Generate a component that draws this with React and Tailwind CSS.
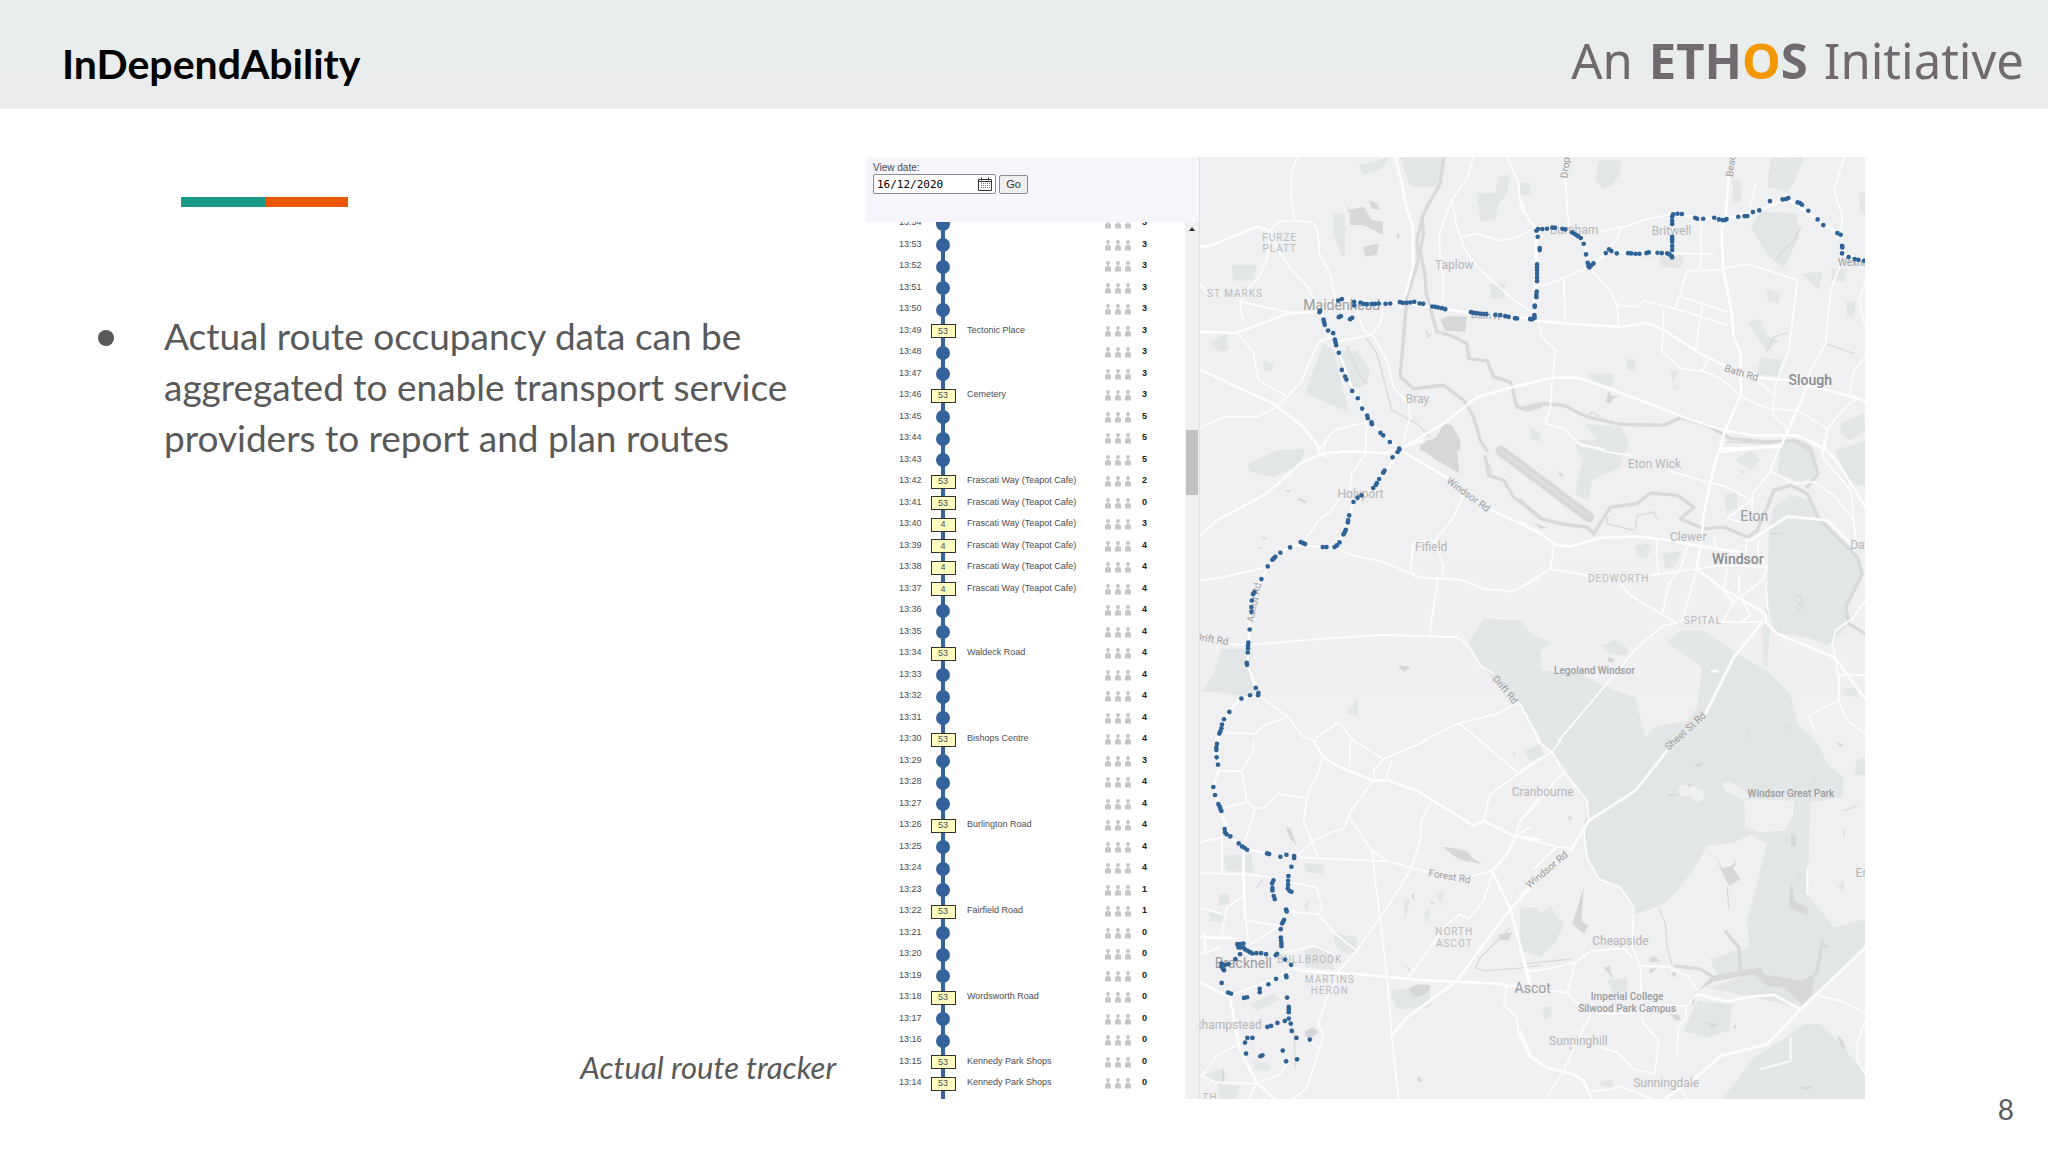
import React from "react";

const START_MINUTE = 54;

// [occupancy, route, stop] per minute, newest first
const LOG = [
  [3], [3], [3], [3], [3],
  [3, "53", "Tectonic Place"],
  [3], [3],
  [3, "53", "Cemetery"],
  [5], [5], [5],
  [2, "53", "Frascati Way (Teapot Cafe)"],
  [0, "53", "Frascati Way (Teapot Cafe)"],
  [3, "4", "Frascati Way (Teapot Cafe)"],
  [4, "4", "Frascati Way (Teapot Cafe)"],
  [4, "4", "Frascati Way (Teapot Cafe)"],
  [4, "4", "Frascati Way (Teapot Cafe)"],
  [4], [4],
  [4, "53", "Waldeck Road"],
  [4], [4], [4],
  [4, "53", "Bishops Centre"],
  [3], [4], [4],
  [4, "53", "Burlington Road"],
  [4], [4], [1],
  [1, "53", "Fairfield Road"],
  [0], [0], [0],
  [0, "53", "Wordsworth Road"],
  [0], [0],
  [0, "53", "Kennedy Park Shops"],
  [0, "53", "Kennedy Park Shops"],
];

// The map is cut in six tiles; every tile has its own origin.
const TILES = [
  {
    id: "maidenhead",
    x: -27,
    y: -21,
    parks: "M400,580L345,730 440,770 475,785 430,600ZM440,600L500,600 540,660 530,700 480,725 450,650ZM505,45L600,22 570,60 520,75ZM630,22L765,22 740,110 660,110ZM860,130L915,130 925,80 960,75 950,130 925,160 915,210 870,215ZM125,345L200,345 190,390 130,390ZM60,580L110,545 115,600 90,605ZM900,400L945,400 940,445 900,445ZM430,190L465,190 465,320 455,320 430,250ZM990,100L1020,100 1018,135 990,132ZM220,630L250,640 245,665 220,660Z",
    lakes: "M478,180L520,170 545,210 578,215 578,255 520,225 480,225ZM520,290L565,280 560,315 525,320ZM750,510L770,498 830,500 825,545 765,542ZM470,165L482,185 474,185ZM535,152L560,158 570,180 545,175ZM690,885L740,860 760,820 785,825 810,870 810,900 690,900ZM620,250L628,250 628,262 620,262Z",
    rivers: "M760,22L750,100 700,190 680,270 685,330 650,440 640,560 630,680 670,715 760,705 820,750 850,800 870,870 890,900M695,200L700,250 690,300 705,380 708,430 740,545 780,555 830,580 835,625 890,632 910,680 960,695 980,770 1010,780 1050,768",
    streams: "M470,590L510,680 530,700M525,560L560,610 605,780 680,820 720,860M708,540L712,560 722,552",
    minor: "M320,22L305,70 303,150 314,212 265,214 240,240M314,212L368,218 384,250 388,310 420,370 434,440M240,250L265,300 300,355 345,400 385,470M240,260L230,330 205,385 160,430 150,470 160,510M145,452L200,465 300,488M140,548L190,605 205,690 285,735M30,833L100,800 200,800 260,770 330,700 385,575 430,555M850,22L830,85 785,150 748,250 750,350 760,380 757,460M785,150L800,230 825,300 860,350 960,440 1035,495M950,22L985,100 990,170 1035,235M810,262L860,250 930,272 980,262 1020,240M500,480L520,540 550,560 590,630 610,710 655,760 660,800 640,870M430,575L545,555 570,520 578,480M390,895L430,840 530,815 525,900M30,400L50,430",
    major: "M30,288L60,288 200,230 225,236 245,250M30,545L140,548 300,488 385,486M30,658L150,715 250,760 340,830 390,895M615,22L635,100 650,180 668,230 668,350 650,420 632,470M640,890L760,820 860,740 970,710 1050,690M385,486L440,450 640,458 840,488 1030,505 1041,240M390,484L440,590 480,700 545,820 627,895",
    dots: "390,481 388,486 400,508 402,516 404,524 414,541 429,549 434,568 436,576 438,585 446,608 455,659 465,679 469,688 486,722 503,744 516,775 531,796 533,804 544,816 545,822 571,848 579,855 599,875 627,895 444,451 455,447 492,455 492,466 511,457 520,461 530,462 545,461 555,461 566,460 586,461 600,460 629,456 638,458 649,458 660,457 672,455 688,460 699,461 726,469 735,470 744,472 755,474 765,477 842,486 850,488 858,489 868,490 878,491 888,492 915,494 930,495 945,498 955,500 974,504 980,505 1020,507 446,501 452,498 480,507 486,503",
  },
  {
    id: "slough",
    x: 963,
    y: -21,
    parks: "M235,30L300,30 300,70 275,105 250,118 225,90ZM750,25L850,22 820,100 800,125 740,110ZM720,185L830,190 835,260 790,355 745,320 690,230ZM840,370L905,365 895,420ZM680,515L720,505 740,560 775,570 740,605 710,560ZM720,620L785,630 770,680 710,670ZM415,320L490,315 480,355 420,350ZM190,820L300,830 325,870 320,900 250,895ZM200,670L280,670 275,710 220,695ZM0,98L30,98 30,135 0,132ZM740,415L778,430 775,460 740,450ZM635,90L660,90 665,150 640,160ZM930,355L980,355 970,395 935,390ZM30,830L60,850 60,875 30,865ZM1015,125L1034,125 1034,200 1018,185ZM975,455L1005,455 1000,500 980,500ZM960,820L1030,790 1034,840 990,870 960,850ZM315,630L345,625 345,660 320,660ZM450,660L475,665 455,700 480,715 460,715Z",
    lakes: "M255,755L265,722 275,738 298,735 275,748 270,760Z",
    rivers: "M0,775L60,760 130,765 200,800 300,822 430,825 480,802 560,825 630,865 740,875 820,870 870,895",
    streams: "M840,230L820,275 790,300 765,330M740,600L760,560 800,548M915,580L1000,610M200,800L215,785 240,800",
    minor: "M135,85L140,170 146,235M0,145L20,200 48,235M970,22L940,120 965,200 962,240M45,405L80,403 150,375 205,352M205,352L270,420 290,465 350,470 370,452 480,480 620,525M290,465L295,530M130,390L135,520M55,525L65,560 105,600 95,700 90,770 75,820 130,835 180,885 250,895M605,355L680,342 740,360 830,390 805,600 765,700 755,790 800,835M605,360L500,362 465,475M480,440L620,485M545,470L525,600M430,475L425,605 485,655 545,662 600,685 665,740 740,775 830,780 920,835 985,760 1015,745M565,625L545,662M960,340L930,420 915,580 870,660 855,720M1034,395L1015,450 1030,520M1034,620L1000,660 985,740M240,245L330,225 370,210 460,190M300,235L290,270 230,330M460,310L580,312M543,210L540,355M920,835L912,900M700,680L755,730M705,100L690,170",
    major: "M625,75L615,200 603,240 608,355 632,480 640,560 660,610 662,730 610,850 600,895M45,512L135,520 300,530 380,518 430,540 540,610 620,650M715,683L800,690 900,715 1015,745 1034,755M0,706L95,682 170,682 240,705 400,765 500,805 610,840 700,855 830,855 905,890M855,720L780,890 600,895M48,240L130,235 190,275 207,350 266,305 455,310 455,195 610,207 716,181 800,145 965,260 964,310 1034,332M48,240L43,505",
    dots: "48,242 53,237 66,237 80,236 96,233 104,233 126,236 135,238 155,247 162,251 168,255 174,259 181,264 190,281 197,313 202,338 204,348 207,352 212,346 219,340 256,309 266,298 273,303 289,310 323,309 332,310 345,311 357,311 378,309 385,307 411,308 424,309 440,310 447,313 453,318 455,322 455,300 455,288 455,275 455,268 455,260 455,222 455,212 455,200 458,193 471,191 484,192 524,203 530,206 548,206 581,203 595,208 606,210 613,210 618,207 653,200 672,198 680,198 697,186 716,181 748,153 786,148 796,147 803,144 831,157 838,159 844,164 863,182 891,208 908,225 950,249 960,254 964,287 965,292 964,310 984,321 1002,327 1013,329 1030,332 52,260 58,294 58,300 50,343 50,352 50,360 50,371 50,382 50,393 49,424 48,433 48,441 43,466 43,470 42,495 43,503 36,507 30,506",
  },
  {
    id: "holyport",
    x: -27,
    y: 849,
    parks: "M175,70L260,30 345,25 330,75 250,110 180,95ZM95,625L190,625 175,690 200,770 80,755 35,755 70,700ZM470,815L502,770 505,830Z",
    lakes: "M710,0L810,0 800,30 808,100 740,60 690,25ZM285,150L303,150 295,157ZM325,172L350,182 345,189 322,179ZM627,674L660,678 645,695 628,684ZM213,290L230,292 222,298ZM202,321L217,322 210,328Z",
    rivers: "M885,50L895,105 940,120 970,170 1050,230",
    streams: "M885,50L905,95 895,110",
    basin: "M932,32L1195,230",
    minor: "M375,0L390,40 410,50 400,35M410,0L395,40M530,0L525,40 485,100 480,150M450,170L420,215 385,240 345,300M820,160L790,230 735,300 750,350 760,380 755,412 743,418 717,585M735,300L670,305 660,390 680,410 810,418 880,445 965,453 1050,412M345,315L445,325 490,345 580,365 680,408M30,420L100,410 230,380M120,612L185,612 400,595 570,583 800,590 830,610 870,675 910,700M985,785L1050,900M205,765L290,825 340,890 380,900M290,830L220,855 195,880 90,875M380,890L445,845 490,900M700,900L805,848 920,820 980,785M805,848L870,900",
    major: "M30,288L80,240 230,160 330,70 400,38 480,33 590,38 650,15 700,0M640,35L775,115M905,210L1050,278M630,28L550,145 490,185 475,240 460,285 435,320M345,312L300,320 250,355 215,415 190,460 180,550 175,620 172,670 205,765 150,775 115,815 85,890",
    dots: "627,28 622,35 607,51 583,91 579,97 567,116 560,128 557,134 549,143 514,165 502,172 490,185 477,225 474,240 473,246 467,268 464,275 460,282 448,306 440,315 433,320 409,320 398,320 345,311 339,308 332,305 300,321 271,337 256,349 251,354 247,358 233,378 214,416 193,455 189,461 185,480 184,500 184,514 179,567 175,606 174,615 174,624 173,636 170,667 171,673 197,742 205,757 204,764 180,764 154,774 118,814 102,836 96,852 94,863 91,872 88,879",
  },
  {
    id: "windsor",
    x: 963,
    y: 849,
    parks: "M745,270L760,200 810,165 870,180 900,240 1010,350 1020,400 975,490 980,560 920,615 860,590 760,575 740,480ZM-155,605L-110,535 0,540 40,585 95,605 60,630 65,690 180,700 270,745 345,770 375,895 400,860 500,840 530,800 545,680 440,605 480,570 550,570 650,640 740,690 810,760 830,850 890,905 920,970 970,1010 965,1070 870,1085 860,1360 940,1460 1034,1435 1034,1520 880,1670 840,1700 560,1640 690,1600 680,1440 740,1210 690,1180 640,1205 560,1215 540,1250 480,1340 430,1390 345,1420 320,1360 300,1340 235,1310 200,1250 190,1150 205,1095 200,1080 100,935 50,895 -5,790 -80,720 -120,670ZM725,560L748,560 740,680 728,675ZM160,0L325,0 300,80 215,120 205,180 165,160 185,60ZM945,30L1034,0 1034,135 980,130ZM345,315L390,310 380,355 350,345ZM425,340L485,330 460,380 435,385ZM240,615L285,598 325,625 320,645 270,640ZM780,0L860,0 890,50 880,110 840,125 770,100ZM965,745L1010,740 1010,770 975,765ZM610,165L650,155 650,200 620,220ZM645,60L690,30 720,60 690,90Z",
    cutouts: "M670,1080L690,1075 820,1080 818,1125 790,1170 720,1175 675,1160ZM470,1040L500,1030 550,1050 550,1075 530,1085 510,1065 480,1065ZM605,1025L630,1025 690,1065 670,1080 610,1045Z",
    lakes: "M262,650L280,655 280,666 264,664ZM45,250L80,262 60,265ZM110,88L130,105 120,108ZM660,88L678,98 665,98Z",
    rivers: "M0,180L60,235 120,250 200,260 220,280 270,200 350,190 390,158 470,165 520,200 480,235 550,265 610,260 680,290 710,270 740,200 760,150 810,135 860,160 895,235 950,290 1010,350 1025,400 975,500 985,550 1034,580M820,0L870,30 892,100 860,140",
    streams: "M345,265L350,225 400,215 410,235M260,230L260,250 340,270M735,560L740,500M825,470L840,465 845,490 835,515M825,480L850,505M620,5L760,10M780,280L750,280M790,865L805,858M683,878L684,888",
    minor: "M165,5L260,35 330,45M440,90L560,125 620,140 690,180 620,235 660,245M780,10L745,100 695,160 695,210M910,0L905,50 990,150 1005,300M755,95L820,130 880,125 940,165 1000,240M100,315L90,385 0,440M90,385L200,405M390,405L530,385 600,375 735,380M410,300L408,350 415,400M500,320L480,385 445,430 425,520M528,390L485,540M300,430L330,465 470,548M600,545L725,545M470,548L430,555 350,620 250,740 115,900M680,295L675,335M715,300L710,330 740,380 725,420 640,485 605,545M735,430L742,510M1034,480L1000,530 945,570 935,610 945,650 950,705 1034,703M955,700L955,780 865,825 885,875M955,785L980,840 1034,880M620,390L610,440M655,400L655,455M665,480L690,525 665,540M0,790L55,900M580,290L585,320",
    major: "M605,0L580,80 550,220 540,320 528,385 600,440 640,485M600,440L735,520 735,545 770,580 940,650 1034,775M0,245L60,280 110,315 150,318 240,292 350,288 450,300 540,318 660,335M600,35L780,15M860,0L920,30 960,80 1034,200M725,545L640,650 600,730 555,820M690,300L800,228 920,240 1000,320M575,692L591,692",
    dots: "",
  },
  {
    id: "bracknell",
    x: -27,
    y: 1749,
    parks: "M100,345L185,340 190,395 110,390ZM340,365L400,375 400,400 350,395ZM430,575L500,590 500,630 470,640 435,615ZM55,510L100,520 90,545 60,540ZM85,460L115,460 120,490 85,495ZM180,790L250,760 270,775 200,810ZM40,1000L100,985 110,1020 60,1020ZM85,1030L150,1035 140,1075 90,1075ZM600,750L720,730 720,800 620,805ZM345,630L380,615 430,640 430,685 345,680ZM1000,30L1050,10 1050,50 1020,60ZM190,960L240,970 235,990 195,985ZM340,490L360,480 350,510ZM640,480L660,475 645,540ZM740,460L760,450 755,500ZM700,520L720,500 715,545Z",
    lakes: "M287,260L300,262 318,312 300,295ZM755,318L790,322 830,332 850,355 878,370 820,360 790,345ZM655,748Q670,722 718,735Q720,765 670,768ZM680,1012L690,1006 695,1022 684,1024ZM925,580L965,575 955,598 932,598ZM662,465L672,458 674,480ZM720,480L735,490 722,490ZM966,34L976,36 974,43ZM345,870L370,860 385,875 365,890 345,890ZM648,672L662,690 655,690Z",
    rivers: "",
    streams: "M300,270L318,312M312,870L316,980M870,650L856,680 880,690 990,682 1050,672M870,650L960,560M100,985L100,1020 90,1030M220,415L200,440",
    minor: "M480,0L478,75M490,0L580,55 710,0M580,55L550,90 555,120M605,60L590,110M870,0L985,100 1050,55M985,100L900,160 880,240M395,55L380,110 355,150 340,240 385,350M545,125L480,215 460,265 420,275 370,300 325,340M475,225L545,330 570,540 590,700 605,885 625,1075M545,330L590,360M325,350L590,362 710,392M830,410L905,390M720,190L693,240 690,300 660,390 590,500 500,630 445,690M905,400L880,480 835,535 810,520 760,560 720,620 650,715M950,735L940,790 980,830 985,880 1020,950 1050,970M85,90L155,92 170,180 195,205 225,198 265,160 345,172M155,92L190,30 190,0M195,205L165,300 160,400 165,520 175,600M105,200L165,185M30,305L95,290 97,395M30,397L160,400 240,410M300,425L380,440 395,500 385,520 295,512M385,520L430,575 500,630M160,465L110,500 95,580M30,500L95,520M175,540L270,555 180,610M30,640L90,620M130,760L170,745 250,715 310,680M275,635L310,630 370,615 430,640M445,690L440,720 410,770 385,850 400,880 380,950 350,1040 310,1075M150,905L80,945 35,1005 80,1025 200,1028 270,1000 290,965M175,1075L200,1028M345,890L390,925M1020,260L975,285M1050,180L990,240 975,285M1010,690L1050,690",
    major: "M370,0L400,50 440,75 550,120 590,118 680,150 850,255 880,240 970,285 1050,298M975,285L950,340 905,390 960,505 1010,690 1020,730M1050,410L960,505 880,610 800,720 650,830 605,885M300,680L340,690 500,700 700,718 930,728 950,735 985,735M30,590L140,592M30,725L120,770 140,880 150,930 200,1025 255,1075M45,580L45,630M85,0L85,90 70,140 105,250 120,290 170,325 240,340M160,330L160,400 165,520",
    dots: "81,10 79,21 79,28 80,50 84,72 70,139 75,163 85,190 89,198 91,204 94,211 104,265 105,275 110,281 121,287 146,308 156,317 163,321 171,327 231,338 237,340 271,348 289,342 312,346 312,352 304,378 295,406 294,420 294,432 293,443 298,450 304,453 250,419 246,428 247,442 247,449 251,466 254,475 288,506 290,512 282,537 279,543 276,548 272,565 272,590 273,600 274,608 274,616 261,639 257,643 285,656 303,672 228,640 213,637 199,637 187,638 180,634 173,630 165,626 160,620 152,620 145,620 142,610 150,610 160,608 150,640 136,655 115,670 105,672 95,668 94,676 98,683 102,688 95,726 114,755 123,758 162,771 171,769 209,744 209,754 235,730 258,714 288,704 289,709 291,770 296,798 296,806 296,814 296,833 284,840 302,848 262,846 243,855 232,858 305,870 319,891 359,896 172,891 187,891 165,905 168,938 211,946 217,943 278,929 288,961 321,955",
  },
  {
    id: "ascot",
    x: 963,
    y: 1749,
    parks: "M605,1075L700,950 780,900 850,850 900,850 960,910 1034,1000 1034,1075ZM0,500L50,500 60,520 90,495 105,520 130,550 110,600 60,650 0,630ZM490,870L530,780 635,790 625,870 560,890ZM570,655L650,630 690,620 690,700 590,710ZM240,1020L280,1015 275,1040 240,1035ZM10,30L60,10 70,45 30,60ZM70,795L95,800 90,830 70,835ZM1005,60L1034,50 1034,105 1005,100ZM260,720L320,710 320,750 280,760ZM950,440L970,415 970,450Z",
    lakes: "M585,345L605,382 635,378 660,415 625,435 605,395ZM615,380Q640,378 645,357Q650,380 625,388ZM190,437L183,540 203,555 190,578 155,550 165,520ZM660,690L720,680 730,700 840,720 880,700 875,760 845,790 790,740 740,735 700,700 580,722 535,748 575,705ZM808,440L815,430 820,480 860,500 860,525 805,500ZM810,280L825,285 828,318 812,315ZM250,680L270,675 270,690 280,718 262,695ZM388,655L400,645 418,662 388,664ZM385,685L410,680 390,700ZM455,695L467,695 465,706 458,706ZM450,820L475,820 480,838 465,838ZM512,775L525,770 518,795ZM560,845L595,850 575,862ZM635,862L645,850 648,862ZM950,885L960,888 978,928 960,915ZM840,1038L875,1036 870,1044 845,1046ZM143,225L158,230 148,240ZM145,915L160,922 148,928ZM525,70L548,65 540,80 525,76ZM440,160L475,160 445,168ZM500,130L518,130 505,142ZM948,5L968,12 960,20ZM875,108L885,122 878,122Z",
    rivers: "M465,675L540,685 580,710 660,695M660,690L655,620 615,572M860,730L890,690 905,600M905,620L920,615",
    streams: "M620,440L625,505M415,500L435,550 440,620 455,670M0,670L150,655M830,420L840,400M970,210L1010,195M968,265L970,285",
    minor: "M0,90L95,35 120,0M50,0L95,35 130,95 200,180 205,240 190,270 200,350 235,415 300,440 340,500 335,620 360,680 365,840 415,900 402,1000M0,240L40,190 130,95M0,290L110,318 145,322M110,318L40,385M20,690L80,685 165,665 210,632 310,622 335,650M85,750L140,755 175,795M165,665L140,755M360,675L440,678 500,705 530,745M365,795L498,795M530,760L495,800 498,830 472,860 470,945M895,765L960,780 1034,815M1034,840L1010,900 1010,960 1034,1000M75,1075L130,990 170,900 210,820M230,915L290,935 340,985 402,1000M215,1050L270,1045 300,1035 395,1075M230,818L340,818M860,380L860,460M485,1050L500,1075M720,985L810,960 810,890",
    major: "M205,240L345,150 440,30M205,240L150,330M25,440L0,465M0,620L25,725M530,760L620,782 680,768 760,762 840,805M1034,620L840,805 740,910 600,945 520,1015 430,1075M0,870L30,945 80,980 160,1000 190,1020 215,1075",
    dots: "",
  },
];

const LABELS = [
  { text: "Maidenhead", x: 428, y: 454, kind: "town" },
  { text: "FURZE", x: 242, y: 246, kind: "district" },
  { text: "PLATT", x: 242, y: 281, kind: "district" },
  { text: "ST MARKS", x: 108, y: 415, kind: "district" },
  { text: "Taplow", x: 765, y: 330, kind: "village" },
  { text: "Bray", x: 655, y: 732, kind: "village" },
  { text: "Drop", x: 1103, y: 32, kind: "road", angle: -84 },
  { text: "Beac", x: 1599, y: 27, kind: "road", angle: -82 },
  { text: "Burnham", x: 1124, y: 225, kind: "village" },
  { text: "Britwell", x: 1416, y: 230, kind: "village" },
  { text: "Wexha", x: 1960, y: 322, kind: "road" },
  { text: "Bath Rd", x: 1624, y: 652, kind: "road", angle: 17 },
  { text: "Bath R", x: 858, y: 480, kind: "road", angle: 4 },
  { text: "Slough", x: 1832, y: 679, kind: "city" },
  { text: "Holyport", x: 484, y: 1016, kind: "village" },
  { text: "Windsor Rd", x: 804, y: 1016, kind: "road", angle: 36 },
  { text: "Fifield", x: 696, y: 1177, kind: "village" },
  { text: "Ascot Rd", x: 170, y: 1336, kind: "road", angle: -78 },
  { text: "Drift Rd", x: 38, y: 1450, kind: "road", angle: 9 },
  { text: "Drift Rd", x: 914, y: 1600, kind: "road", angle: 50 },
  { text: "Eton Wick", x: 1365, y: 926, kind: "village" },
  { text: "Eton", x: 1664, y: 1086, kind: "town" },
  { text: "Clewer", x: 1466, y: 1146, kind: "village" },
  { text: "Windsor", x: 1615, y: 1214, kind: "city" },
  { text: "Dat", x: 1979, y: 1170, kind: "village" },
  { text: "DEDWORTH", x: 1258, y: 1270, kind: "district" },
  { text: "SPITAL", x: 1510, y: 1396, kind: "district" },
  { text: "Legoland Windsor", x: 1185, y: 1543, kind: "place" },
  { text: "Sheet St Rd", x: 1461, y: 1724, kind: "road", angle: -42 },
  { text: "Cranbourne", x: 1030, y: 1910, kind: "village" },
  { text: "Windsor Great Park", x: 1774, y: 1914, kind: "place" },
  { text: "Windsor Rd", x: 1046, y: 2140, kind: "road", angle: -40 },
  { text: "Forest Rd", x: 750, y: 2161, kind: "road", angle: 10 },
  { text: "NORTH", x: 765, y: 2328, kind: "district" },
  { text: "ASCOT", x: 765, y: 2362, kind: "district" },
  { text: "Bracknell", x: 133, y: 2426, kind: "town" },
  { text: "BULLBROOK", x: 332, y: 2411, kind: "district" },
  { text: "MARTINS", x: 392, y: 2470, kind: "district" },
  { text: "HERON", x: 392, y: 2503, kind: "district" },
  { text: "thampstead", x: 92, y: 2607, kind: "village" },
  { text: "TH", x: 33, y: 2824, kind: "district" },
  { text: "Ascot", x: 1000, y: 2501, kind: "town" },
  { text: "Cheapside", x: 1263, y: 2357, kind: "village" },
  { text: "Er", x: 1984, y: 2153, kind: "village" },
  { text: "Imperial College", x: 1283, y: 2521, kind: "place" },
  { text: "Silwood Park Campus", x: 1283, y: 2558, kind: "place" },
  { text: "Sunninghill", x: 1137, y: 2655, kind: "village" },
  { text: "Sunningdale", x: 1400, y: 2782, kind: "village" },
];

const LABEL_STYLES = {
  city: "fill-[#8b8c8f] text-[42px] font-medium",
  town: "fill-[#9b9c9f] text-[42px]",
  village: "fill-[#b4b5b8] text-[36px]",
  district: "fill-[#b9babc] text-[30px] tracking-widest",
  place: "fill-[#9a9b9e] text-[30px] font-medium",
  road: "fill-[#9c9da0] text-[30px]",
};

function RouteMap() {
  return (
    <svg
      viewBox="0 0 1998 2823"
      preserveAspectRatio="xMinYMin slice"
      className="block h-full w-full bg-[#f0f0f2]"
      role="img"
      aria-label="Route map"
      fill="none"
      strokeLinecap="round"
      strokeLinejoin="round"
    >
      <defs>
        <linearGradient id="land" x1="0" y1="0" x2="0" y2="1">
          <stop offset="0" stopColor="#eff0f1" />
          <stop offset="1" stopColor="#f0eff1" />
        </linearGradient>
      </defs>
      <rect width="1998" height="2830" fill="url(#land)" />
      <path d="M1190,330L1430,300 1420,430 1250,450Z" fill="#f1f1ef" />
      <path d="M1300,2290L1480,2130 1530,2060 1700,2060 1680,2330 1500,2500 1998,2540 1998,2700 1480,2700 1320,2500Z" fill="#eef0f1" />
      <path d="M1823,1920L1998,1920 1998,2280 1900,2310 1823,2200Z" fill="#eef0f1" />

      {TILES.map((t) => (
        <g key={t.id} transform={`translate(${t.x} ${t.y})`}>
          <path d={t.parks} fill="#e3e6e7" />
          {t.cutouts && <path d={t.cutouts} fill="#eef0f1" />}
        </g>
      ))}
      {TILES.map((t) => (
        <g key={t.id} transform={`translate(${t.x} ${t.y})`} stroke="#d8d9db">
          <path d={t.lakes} fill="#d5d7d8" stroke="none" />
          <path d={t.rivers} strokeWidth="10" />
          <path d={t.streams} strokeWidth="4" />
          {t.basin && <path d={t.basin} strokeWidth="32" />}
          {t.basin && <path d={t.basin} stroke="#f0f0f2" strokeWidth="2" />}
        </g>
      ))}
      {TILES.map((t) => (
        <g key={t.id} transform={`translate(${t.x} ${t.y})`} stroke="#fdfdfe">
          <path d={t.minor} strokeWidth="5" />
          <path d={t.major} strokeWidth="8" />
        </g>
      ))}

      {LABELS.map((l) => (
        <text
          key={`${l.text}-${l.x}`}
          x={l.x}
          y={l.y}
          textAnchor="middle"
          transform={l.angle ? `rotate(${l.angle} ${l.x} ${l.y})` : undefined}
          dy="5"
          className={`font-['Roboto',sans-serif] ${LABEL_STYLES[l.kind]}`}
        >
          {l.text}
        </text>
      ))}

      {TILES.filter((t) => t.dots).map((t) => (
        <g key={t.id} transform={`translate(${t.x} ${t.y})`} fill="#2f6296">
          {t.dots.split(" ").map((p) => {
            const [cx, cy] = p.split(",");
            return <circle key={p} cx={cx} cy={cy} r="7" />;
          })}
        </g>
      ))}
      <path d="M1,0V2830" stroke="#dcdcde" strokeWidth="3" />
    </svg>
  );
}

function Person() {
  return (
    <svg viewBox="0 0 6 11" className="h-[11px] w-[6px]" fill="#c6c5c9" aria-hidden="true">
      <circle cx="3" cy="2" r="2" />
      <path d="M2.4 3.5h1.2v1.8h-1.2z" />
      <path d="M0 10.5V7.2Q0 5 3 5T6 7.2v3.3z" />
    </svg>
  );
}

function LogRow({ minute, count, route, stop }) {
  return (
    <tr className="odd:h-[21px] even:h-[22px]">
      <td className="p-0 pb-[2px] pl-[33px]">13:{minute}</td>
      <td className="p-0">
        {route ? (
          <span className="mx-auto flex h-[14px] w-[25px] items-center justify-center border border-[#333] bg-[#feffc0] leading-none">
            {route}
          </span>
        ) : (
          <span className="mx-auto block size-[14px] rounded-full bg-[#33639a]" />
        )}
      </td>
      <td className="p-0 pb-[2px] pl-[7px] whitespace-nowrap">{stop}</td>
      <td className="p-0 pl-[5px]">
        <span className="flex gap-1">
          <Person />
          <Person />
          <Person />
        </span>
      </td>
      <td className="p-0 pb-[2px] pl-[5px] font-bold text-[#222]">{count}</td>
    </tr>
  );
}

function TrackerPanel() {
  return (
    <div className="flex w-[333px] shrink-0 flex-col font-['Liberation_Sans',Arial,sans-serif] text-[#4b4b50]">
      <form className="h-[65px] bg-[#f6f5fb] pt-1 pl-[7px]" onSubmit={(e) => e.preventDefault()}>
        <label htmlFor="view-date" className="block text-[10px] leading-[13px]">
          View date:
        </label>
        <div className="flex items-center gap-[3px]">
          <div className="relative">
            <input
              id="view-date"
              type="text"
              defaultValue="16/12/2020"
              className="block h-5 w-[123px] rounded-[2px] border border-[#8b8b90] bg-white px-[3px] font-['DejaVu_Sans_Mono',monospace] text-[11px] text-black"
            />
            <svg viewBox="0 0 14 14" className="pointer-events-none absolute top-[3px] right-1 size-[14px]" fill="none" stroke="#333" aria-hidden="true">
              <path d="M.5 2.5h13v11H.5zM.5 4.5h13M3.5.5v3M10.5.5v3" />
              <path d="M3 6.5h9M3 8.5h9M3 10.5h9" stroke="#777" strokeDasharray="1 1" />
            </svg>
          </div>
          <button type="submit" className="h-[19px] w-[29px] rounded-[2px] border border-[#8b8b90] bg-[#efefef] text-[11px] leading-none text-[#333]">
            Go
          </button>
        </div>
      </form>

      <div className="flex h-[877px] overflow-hidden bg-white">
        <div className="relative w-[319px]">
          <div className="absolute inset-y-0 left-[75px] w-1 bg-[#33639a]" />
          <table className="relative -mt-[9px] w-full table-fixed border-collapse text-[9px] leading-[11px]">
            <colgroup>
              <col className="w-[60px]" />
              <col className="w-[34px]" />
              <col className="w-[140px]" />
              <col className="w-[37px]" />
              <col />
            </colgroup>
            <tbody>
              {LOG.map(([count, route, stop], i) => (
                <LogRow key={i} minute={START_MINUTE - i} count={count} route={route} stop={stop} />
              ))}
            </tbody>
          </table>
        </div>
        <div className="w-[14px] bg-[#f0eff2]" aria-hidden="true">
          <svg viewBox="0 0 14 14" className="size-[14px]" fill="#333">
            <path d="M4 9l3-4 3 4z" />
          </svg>
          <div className="mt-[194px] ml-px h-[65px] w-3 bg-[#c1c0c2]" />
        </div>
      </div>
    </div>
  );
}

export default function App() {
  return (
    <div className="flex min-h-screen flex-col bg-white font-['Lato',sans-serif] text-[#595959]">
      <header className="flex h-[109px] items-center justify-between bg-linear-to-b from-[#e7eeeb] to-[#ebebed] pr-6 pl-[62px]">
        <h1 className="pt-[18px] text-[41px] leading-[48px] font-bold text-black">InDependAbility</h1>
        <p className="flex items-baseline gap-4 pt-[10px] font-['Noto_Sans',sans-serif] text-[49px] leading-[60px] text-[#706a70]">
          <span>An</span>
          <strong className="font-bold">
            ETH<span className="text-[#f39800]">O</span>S
          </strong>
          <span>Initiative</span>
        </p>
      </header>

      <main className="grid flex-1 grid-cols-[866fr_999fr_183fr] pt-12">
        <section className="flex flex-col pb-[61px]">
          <div className="mt-10 ml-[181px] flex h-[10px] w-[167px]">
            <div className="flex-1 bg-[#1a9988]" />
            <div className="flex-1 bg-[#eb5600]" />
          </div>
          <ul className="mt-[103px] pr-12 pl-[98px]">
            <li className="flex items-start gap-[50px] text-[37px] leading-[51px]">
              <span className="mt-[20px] size-4 shrink-0 rounded-full bg-[#595959]" />
              <span>Actual route occupancy data can be aggregated to enable transport service providers to report and plan routes</span>
            </li>
          </ul>
          <p className="mt-auto pr-[30px] text-right text-[31px] leading-[48px] italic">Actual route tracker</p>
        </section>

        <section className="flex h-[942px]">
          <TrackerPanel />
          <div className="min-w-0 flex-1">
            <RouteMap />
          </div>
        </section>

        <footer className="flex items-end justify-end pr-[34px] pb-[25px] text-[28px] leading-9">8</footer>
      </main>
    </div>
  );
}
